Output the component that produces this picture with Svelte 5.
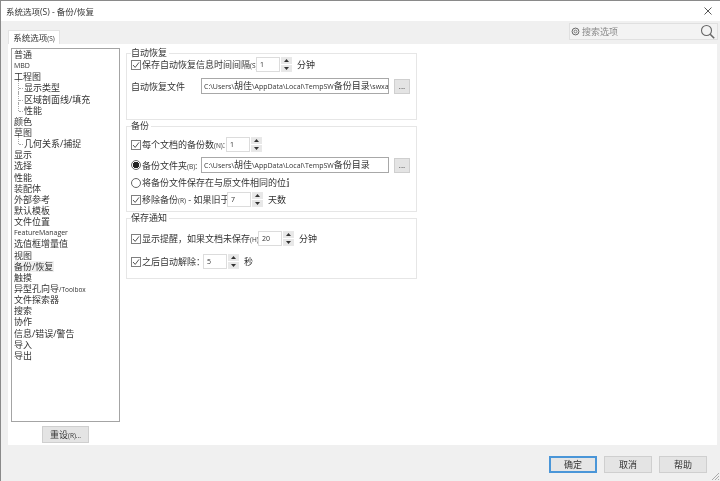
<script>
  const tree = [
    { t: '普通' }, { t: 'MBD', small: true }, { t: '工程图' },
    { t: '显示类型', child: true }, { t: '区域剖面线/填充', child: true }, { t: '性能', child: true, last: true },
    { t: '颜色' }, { t: '草图' }, { t: '几何关系/捕捉', child: true, last: true },
    { t: '显示' }, { t: '选择' }, { t: '性能' }, { t: '装配体' }, { t: '外部参考' }, { t: '默认模板' }, { t: '文件位置' },
    { t: 'FeatureManager', small: true }, { t: '选值框增量值' }, { t: '视图' }, { t: '备份/恢复', selected: true },
    { t: '触摸' }, { t: '异型孔向导', tail: '/Toolbox' }, { t: '文件探索器' }, { t: '搜索' }, { t: '协作' },
    { t: '信息/错误/警告' }, { t: '导入' }, { t: '导出' }
  ]
</script>

{#snippet check()}
  <span class="check">
    <svg width="10" height="10" viewBox="0 0 10 10"><path d="M2 5l2.2 2.4L8 2.4" fill="none" stroke="#555" stroke-width="1"/></svg>
  </span>
{/snippet}

{#snippet spinner(value)}
  <span class="spinner">
    <span class="spin-value">{value}</span>
    <span class="spin-arrows">
      <svg width="11" height="7" viewBox="0 0 11 7"><path d="M5.5 2L8 5H3z" fill="#333"/></svg>
      <svg width="11" height="7" viewBox="0 0 11 7"><path d="M5.5 5L3 2h5z" fill="#333"/></svg>
    </span>
  </span>
{/snippet}

{#snippet path(tail)}
  <span class="path">C:\Users\<b>胡佳</b>\AppData\Local\TempSW<b>备份目录</b>{tail}</span>
{/snippet}

<div class="window">
  <header class="titlebar">
    <span>系统选项(S) - 备份/恢复</span>
    <svg class="close" width="10" height="10" viewBox="0 0 10 10"><path d="M1.5 1.5l7 7M8.5 1.5l-7 7" stroke="#444" stroke-width="0.9"/></svg>
  </header>

  <div class="tabbar">
    <div class="tab">系统选项<small>(S)</small></div>
    <div class="search">
      <svg width="9" height="9" viewBox="0 0 10 10"><circle cx="5" cy="5" r="3.8" fill="none" stroke="#666" stroke-width="1.1"/><circle cx="5" cy="5" r="1.6" fill="none" stroke="#666" stroke-width="0.9"/></svg>
      <span class="search-text">搜索选项</span>
      <svg class="lens" width="15" height="15" viewBox="0 0 15 15"><circle cx="6.5" cy="6.5" r="5" fill="none" stroke="#666" stroke-width="1.1"/><path d="M10.2 10.2l4 4" stroke="#666" stroke-width="1.6"/></svg>
    </div>
  </div>

  <main class="panel">
    <aside class="side">
      <ul class="tree">
        {#each tree as item}
          <li class:child={item.child} class:last={item.last} class:small={item.small}>
            <span class:selected={item.selected}>{item.t}{#if item.tail}<small>{item.tail}</small>{/if}</span>
          </li>
        {/each}
      </ul>
      <button class="btn reset">重设<small>(R)...</small></button>
    </aside>

    <div class="groups">
      <section class="group g1">
        <h3>自动恢复</h3>
        <div class="row">
          {@render check()}
          <span class="label w-auto">保存自动恢复信息时间间隔<small>(S)</small></span>
          {@render spinner('1')}
          <span class="unit">分钟</span>
        </div>
        <div class="row tall mt6">
          <span class="label w-file">自动恢复文件</span>
          <span class="input">{@render path('\\swxa')}</span>
          <button class="btn dots">...</button>
        </div>
      </section>

      <section class="group g2">
        <h3>备份</h3>
        <div class="row">
          {@render check()}
          <span class="label w-count">每个文档的备份数<small>(N)</small>:</span>
          {@render spinner('1')}
        </div>
        <div class="row tall mt5">
          <span class="radio on"></span>
          <span class="label w-folder">备份文件夹<small>(B)</small>:</span>
          <span class="input">{@render path('')}</span>
          <button class="btn dots">...</button>
        </div>
        <div class="row mt2">
          <span class="radio"></span>
          <span class="label w-same">将备份文件保存在与原文件相同的位置</span>
        </div>
        <div class="row mt2">
          {@render check()}
          <span class="label w-remove">移除备份<small>(R)</small> - 如果旧于</span>
          {@render spinner('7')}
          <span class="unit">天数</span>
        </div>
      </section>

      <section class="group g3">
        <h3>保存通知</h3>
        <div class="row">
          {@render check()}
          <span class="label w-remind">显示提醒，如果文档未保存<small>(H)</small></span>
          {@render spinner('20')}
          <span class="unit">分钟</span>
        </div>
        <div class="row mt8">
          {@render check()}
          <span class="label w-dismiss">之后自动解除：</span>
          {@render spinner('5')}
          <span class="unit">秒</span>
        </div>
      </section>
    </div>
  </main>

  <footer class="footer">
    <button class="btn primary">确定</button>
    <button class="btn action">取消</button>
    <button class="btn action">帮助</button>
    <svg class="grip" width="10" height="10" viewBox="0 0 10 10"><path d="M9 2L2 9M9 5L5 9M9 8L8 9" stroke="#aaa" stroke-width="1"/></svg>
  </footer>
</div>

<style>
  :global(body) {
    margin: 0;
    background: #f0f0f0;
  }
  .window {
    position: relative;
    width: 720px;
    height: 481px;
    box-sizing: border-box;
    border-top: 1px solid #8a8a8a;
    border-left: 1px solid #8a8a8a;
    background: #f0f0f0;
    font-family: "Open Sans", "Noto Sans CJK SC", sans-serif;
    font-size: 9px;
    color: #333;
    display: flex;
    flex-direction: column;
    filter: blur(0.45px);
    overflow: hidden;
  }
  small {
    font-size: 6.5px;
  }
  .titlebar {
    height: 20px;
    flex: none;
    background: #fff;
    display: flex;
    align-items: center;
    justify-content: space-between;
    padding: 0 7px 0 5px;
    font-size: 8.5px;
  }
  .tabbar {
    height: 23px;
    flex: none;
    display: flex;
    align-items: flex-end;
    justify-content: space-between;
    padding: 0 2px 0 7px;
    position: relative;
  }
  .tab {
    width: 52px;
    height: 14px;
    background: #fff;
    border: 1px solid #e2e2e2;
    border-bottom: none;
    box-sizing: border-box;
    text-align: center;
    line-height: 14px;
    font-size: 8.5px;
  }
  .search {
    width: 149px;
    height: 17px;
    box-sizing: border-box;
    align-self: flex-start;
    margin-top: 2px;
    background: #f3f3f3;
    border: 1px solid #e0e0e0;
    display: flex;
    align-items: center;
    gap: 2px;
    padding: 0 2px 0 1px;
    color: #8a8a8a;
  }
  .search-text {
    flex: 1;
  }
  .panel {
    margin-left: 7px;
    width: 709px;
    height: 401px;
    flex: none;
    box-sizing: border-box;
    background: #fff;
    padding: 4px 0 0 3px;
    display: flex;
    gap: 6px;
  }
  .side {
    width: 109px;
    display: flex;
    flex-direction: column;
    align-items: center;
  }
  .tree {
    list-style: none;
    margin: 0;
    padding: 0 0 0 2px;
    width: 100%;
    height: 374px;
    box-sizing: border-box;
    border: 1px solid #a4a4a4;
  }
  .tree li {
    height: 11.15px;
    line-height: 11.15px;
    white-space: nowrap;
    position: relative;
  }
  .tree li.small {
    font-size: 7px;
  }
  .tree li.child {
    padding-left: 10px;
  }
  .tree li.child::before {
    content: "";
    position: absolute;
    left: 4px;
    top: -2px;
    bottom: 0;
    border-left: 1px dotted #a8a8a8;
  }
  .tree li.child.last::before {
    bottom: 5px;
  }
  .tree li.child::after {
    content: "";
    position: absolute;
    left: 5px;
    top: 6px;
    width: 4px;
    border-top: 1px dotted #a8a8a8;
  }
  .selected {
    background: #f0f0f0;
    display: inline-block;
    padding-right: 1px;
  }
  .btn {
    font: inherit;
    color: inherit;
    padding: 0;
    background: #e4e4e4;
    border: 1px solid #cfcfcf;
    box-sizing: border-box;
    display: block;
  }
  .reset {
    width: 47px;
    height: 17px;
    margin-top: 4px;
  }
  .groups {
    width: 291px;
    display: flex;
    flex-direction: column;
    gap: 6px;
    padding-top: 5px;
  }
  .group {
    position: relative;
    box-sizing: border-box;
    border: 1px solid #e6e6e6;
    padding-left: 4px;
  }
  .group h3 {
    position: absolute;
    left: 4px;
    top: -7px;
    margin: 0;
    padding-right: 2px;
    background: #fff;
    font: inherit;
    line-height: 12px;
  }
  .g1 {
    height: 67px;
    padding-top: 3px;
  }
  .g2 {
    height: 86px;
    padding-top: 10px;
  }
  .g3 {
    height: 61px;
    padding-top: 12px;
  }
  .row {
    display: flex;
    align-items: center;
    height: 15px;
  }
  .row.tall {
    height: 16px;
  }
  .mt2 { margin-top: 2px; }
  .mt5 { margin-top: 5px; }
  .mt6 { margin-top: 6px; }
  .mt8 { margin-top: 8px; }
  .check {
    width: 10px;
    height: 10px;
    flex: none;
    box-sizing: border-box;
    border: 1px solid #808080;
    background: #fff;
    display: flex;
    align-items: center;
    justify-content: center;
    margin-right: 1px;
  }
  .check svg {
    flex: none;
  }
  .radio {
    width: 10px;
    height: 10px;
    flex: none;
    box-sizing: border-box;
    border: 1px solid #666;
    border-radius: 50%;
    margin-right: 1px;
    background: #fff;
  }
  .radio.on {
    background: radial-gradient(circle, #222 0 3px, #fff 3.5px);
  }
  .label {
    overflow: hidden;
    white-space: nowrap;
    flex: none;
  }
  .w-auto { width: 114px; }
  .w-file { width: 70px; }
  .w-count { width: 84px; }
  .w-folder { width: 59px; }
  .w-same { width: 147px; }
  .w-remove { width: 85px; }
  .w-remind { width: 116px; }
  .w-dismiss { width: 61px; }
  .spinner {
    display: flex;
    width: 36px;
    height: 15px;
    flex: none;
  }
  .spin-value {
    width: 24px;
    box-sizing: border-box;
    border: 1px solid #dcdcdc;
    padding-left: 3px;
    line-height: 13px;
    font-size: 7px;
  }
  .spin-arrows {
    width: 11px;
    margin-left: 1px;
    display: flex;
    flex-direction: column;
    gap: 1px;
  }
  .spin-arrows svg {
    display: block;
    background: #e8e8e8;
  }
  .unit {
    margin-left: 5px;
  }
  .input {
    width: 188px;
    height: 16px;
    flex: none;
    box-sizing: border-box;
    border: 1px solid #a8a8a8;
    padding-left: 2px;
    line-height: 14px;
    overflow: hidden;
    white-space: nowrap;
  }
  .path {
    font-size: 7px;
  }
  .path b {
    font-weight: 400;
    font-size: 9px;
  }
  .dots {
    width: 16px;
    height: 15px;
    margin-left: 5px;
    line-height: 10px;
    font-size: 8px;
  }
  .footer {
    flex: 1;
    display: flex;
    justify-content: flex-end;
    align-items: flex-start;
    padding: 11px 13px 0 0;
    position: relative;
    gap: 7px;
  }
  .primary,
  .action {
    width: 48px;
    height: 17px;
  }
  .primary {
    border: 2px solid #4a96d8;
    background: #e6e6e6;
  }
  .grip {
    position: absolute;
    right: 0;
    bottom: 0;
  }
  .close {
    flex: none;
  }
</style>
